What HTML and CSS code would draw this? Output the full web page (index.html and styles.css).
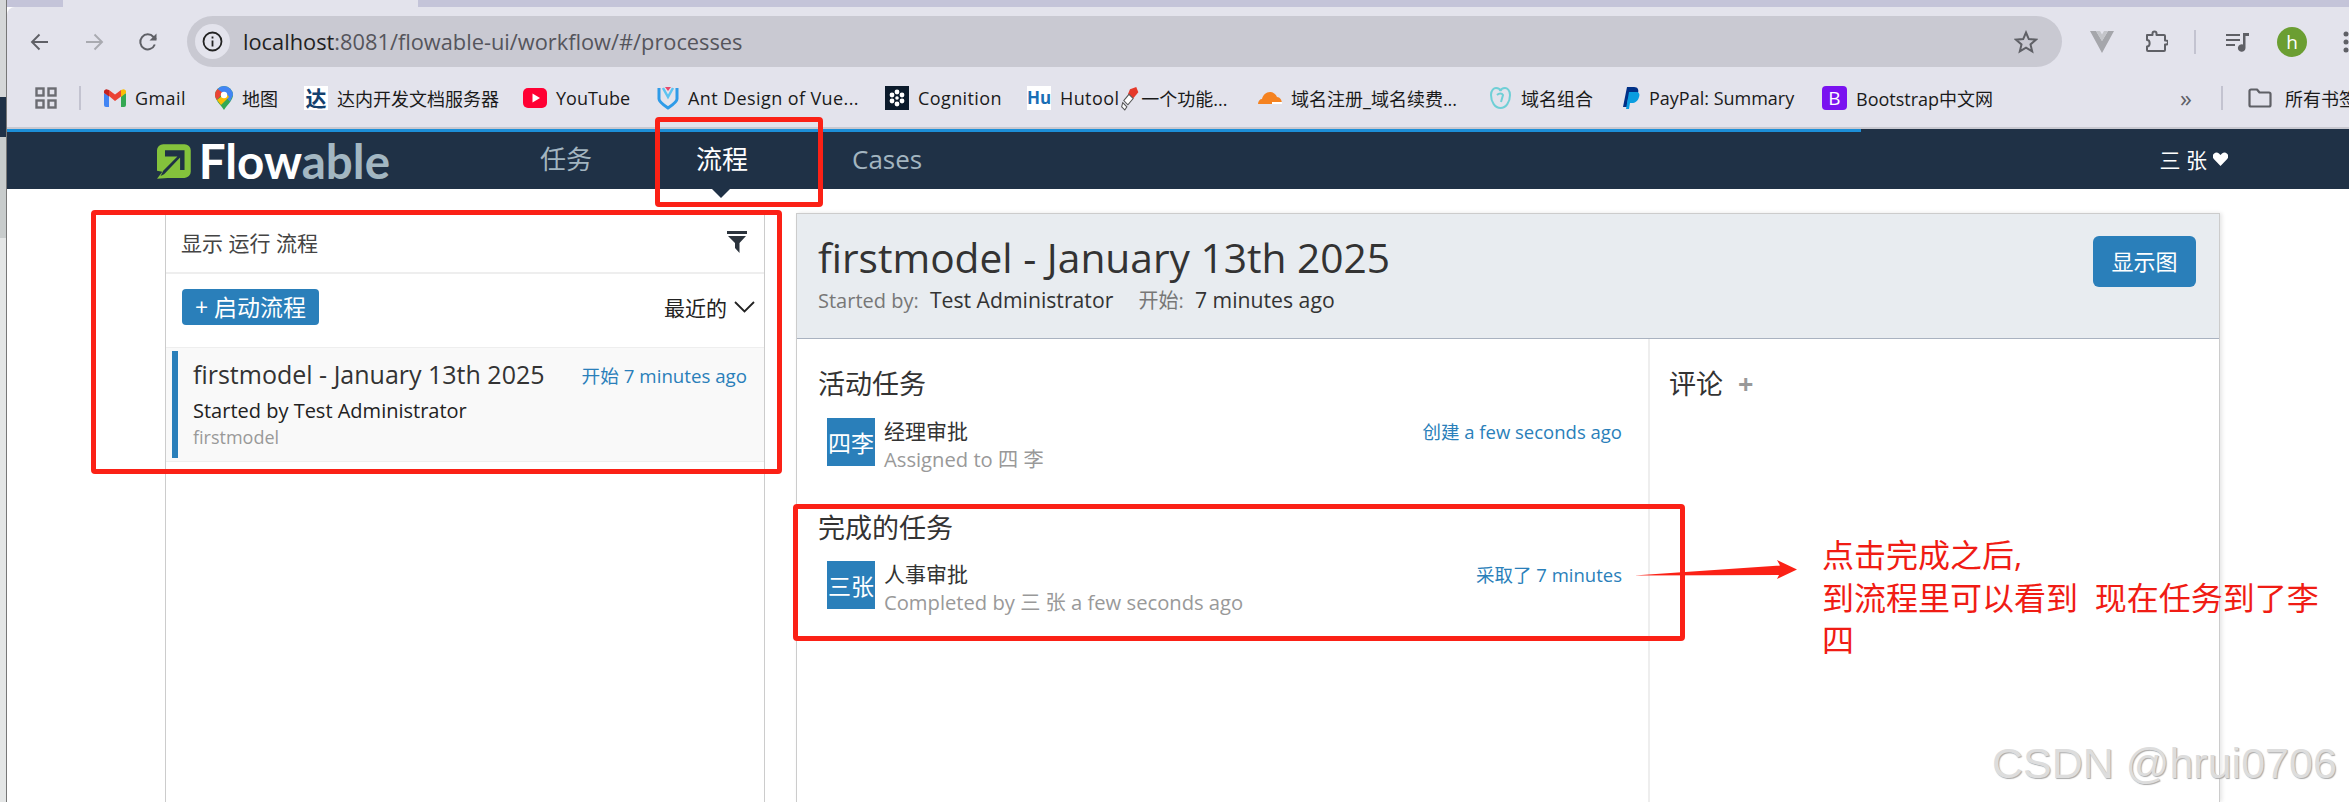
FILE: index.html
```html
<!DOCTYPE html>
<html lang="en">
<head>
    <meta charset="UTF-8">
    <title>Flowable - processes</title>
    <link rel="stylesheet" href="styles.css">
</head>
<body>

<div class="side-strip"></div>

<div class="window">
    <!-- browser chrome -->
    <div class="tab-strip">
        <div class="tab-active"></div>
    </div>
    <div class="toolbar">
        <div class="tool-btn">
            <svg width="20" height="20" viewBox="0 0 20 20" fill="none" stroke="#5f6066" stroke-width="1.9"><path d="M18 10H2M9.500 2.500 2 10l7.500 7.500"/></svg>
        </div>
        <div class="tool-btn">
            <svg width="20" height="20" viewBox="0 0 20 20" fill="none" stroke="#a9aab0" stroke-width="1.9"><path d="M2 10h16M10.500 2.500 18 10l-7.500 7.500"/></svg>
        </div>
        <div class="tool-btn">
            <svg width="20" height="20" viewBox="0 0 20 20" fill="none" stroke="#5f6066" stroke-width="2"><path d="M16.800 12.500A7.500 7.500 0 1 1 15.500 5L18 7.500"/><path d="M18.500 1.500v7h-7" fill="#5f6066" stroke="none"/></svg>
        </div>
        <div class="url-bar">
            <div class="url-info">
                <svg width="21" height="21" viewBox="0 0 21 21" fill="none" stroke="#222" stroke-width="1.800"><circle cx="10.500" cy="10.500" r="9"/><path d="M10.500 9.500v6M10.500 5.500v2"/></svg>
            </div>
            <div class="url-text"><span class="url-host">localhost</span>:8081/flowable-ui/workflow/#/processes</div>
            <svg class="url-star" width="24" height="24" viewBox="0 0 24 24" fill="none" stroke="#5f6066" stroke-width="2"><path d="M12 2.500l2.800 6.600 7.200.6-5.500 4.700 1.700 7-6.200-3.700-6.200 3.700 1.700-7L2 9.700l7.200-.6z"/></svg>
        </div>
        <div class="tool-btn first-right">
            <svg width="24" height="22" viewBox="0 0 24 22"><path d="M0 0h6l6 10 6-10h6L12 22z" fill="#a5a6ab"/><path d="M6 0h4l2 3.500L14 0h4l-6 10z" fill="#c4c5ca"/></svg>
        </div>
        <div class="tool-btn">
            <svg width="24" height="24" viewBox="0 0 24 24" fill="none" stroke="#5f6066" stroke-width="2"><path d="M3 5h5.500V3.500a2 2 0 0 1 4 0V5H20a1 1 0 0 1 1 1v4.500h1a2 2 0 0 1 0 4h-1V20a1 1 0 0 1-1 1H4a1 1 0 0 1-1-1v-3.500c3.500 0 3.500-6.500 0-6.500z" stroke-linejoin="round"/></svg>
        </div>
        <div class="tool-sep"></div>
        <div class="tool-btn">
            <svg width="24" height="20" viewBox="0 0 24 20" fill="#5f6066"><path d="M0 2h14v2H0zM0 7h14v2H0zM0 12h9v2H0z"/><path d="M17 1h6v3h-3.500v12a3.800 3.800 0 1 1-2.500-3.500z"/></svg>
        </div>
        <div class="tool-btn"><div class="profile">h</div></div>
        <div class="tool-btn">
            <svg width="6" height="24" viewBox="0 0 6 24" fill="#5f6066"><circle cx="3" cy="4" r="2.500"/><circle cx="3" cy="12" r="2.500"/><circle cx="3" cy="20" r="2.500"/></svg>
        </div>
    </div>
    <div class="bookmarks">
        <svg class="apps-icon" width="22" height="22" viewBox="0 0 22 22" fill="none" stroke="#6b6c72" stroke-width="2.400"><rect x="1.500" y="1.500" width="7" height="7"/><rect x="13.500" y="1.500" width="7" height="7"/><rect x="1.500" y="13.500" width="7" height="7"/><rect x="13.500" y="13.500" width="7" height="7"/></svg>
        <div class="mark-sep"></div>
        <div class="mark mark-gmail">
            <svg width="22" height="18" viewBox="0 0 22 18"><path d="M0 4v12a2 2 0 0 0 2 2h3V7z" fill="#4285f4"/><path d="M22 4v12a2 2 0 0 1-2 2h-3V7z" fill="#34a853"/><path d="M17 1v7l5-4V2.500c0-2-2.500-3-4-1.800z" fill="#fbbc04"/><path d="M5 7V1l6 4.500L17 1v6.500l-6 4.500z" fill="#ea4335"/><path d="M0 2.500V4l5 3.500V1l-1-.3C2.500-.5 0 .5 0 2.500z" fill="#c5221f"/></svg>
            <span class="wide">Gmail</span>
        </div>
        <div class="mark mark-maps">
            <svg width="18" height="24" viewBox="0 0 18 24"><path d="M9 0a9 9 0 0 1 9 9c0 5-5 9-9 15-4-6-9-10-9-15a9 9 0 0 1 9-9z" fill="#34a853"/><path d="M2.500 3 15 15.500 18 9A9 9 0 0 0 9 0 9 9 0 0 0 2.500 3z" fill="#4285f4"/><path d="M2.500 3A9 9 0 0 0 0 9c0 1.800.8 3.500 2 5l6-7z" fill="#ea4335"/><path d="M2 14l4 5 8-8-3-4z" fill="#fbbc04"/><circle cx="9" cy="9" r="3.200" fill="#fff"/></svg>
            <span>地图</span>
        </div>
        <div class="mark mark-da">
            <div class="fav-da">达</div>
            <span>达内开发文档服务器</span>
        </div>
        <div class="mark mark-yt">
            <svg width="24" height="24" viewBox="0 0 24 24"><rect y="2" width="24" height="20" rx="5" fill="#ff0033"/><path d="M9.500 7.500v9l7.500-4.500z" fill="#fff"/></svg>
            <span>YouTube</span>
        </div>
        <div class="mark mark-ant">
            <svg width="22" height="24" viewBox="0 0 22 24" fill="none"><path d="M2 2v11c0 3 6 7 9 9 3-2 9-6 9-9V2" stroke="#2f9be8" stroke-width="3"/><path d="M6 2l5 9 5-9" stroke="#5cc3f0" stroke-width="2.500"/><path d="M8 1h6l-3 4z" fill="#e8476a"/></svg>
            <span class="wide">Ant Design of Vue...</span>
        </div>
        <div class="mark mark-cog">
            <div class="fav-cog">
                <svg width="16" height="18" viewBox="0 0 16 18" fill="#fff"><circle cx="8" cy="3" r="2.400"/><circle cx="8" cy="15" r="2.400"/><circle cx="3" cy="6" r="2.400"/><circle cx="13" cy="6" r="2.400"/><circle cx="3" cy="12" r="2.400"/><circle cx="13" cy="12" r="2.400"/><circle cx="8" cy="9" r="1.800"/></svg>
            </div>
            <span class="wide">Cognition</span>
        </div>
        <div class="mark mark-hu">
            <div class="fav-hu">Hu</div>
            <span class="hutool"><span class="wide">Hutool</span><svg width="22" height="25" viewBox="0 0 18 24"><path d="M9 3l6-2 2 5-5 6-5-4z" fill="#e5392a"/><path d="M3 14l5-6 4 4-5 6z" fill="#fff" stroke="#555"/><path d="M2 16l4 4-2 3-3-3z" fill="#fff" stroke="#555"/></svg>一个功能...</span>
        </div>
        <div class="mark mark-cloud">
            <svg width="24" height="14" viewBox="0 0 24 14"><path d="M0 13c0-3 2-5 4-5 1-4 4-7 8-7 3 0 6 2 7 5 3 0 5 3 5 7z" fill="#f58220"/><path d="M14 11h10v2H14z" fill="#fff"/></svg>
            <span>域名注册_域名续费...</span>
        </div>
        <div class="mark mark-domain">
            <svg width="23" height="24" viewBox="0 0 23 24" fill="none" stroke="#6fcfd6" stroke-width="2"><path d="M11.500 22C6 22 2 16 2 9c0-5 3-7 5-7s4 1 4.500 3C12 3 14 2 16 2s5 2 5 7c0 7-4 13-9.500 13z"/><path d="M8 9c2-2 5-2 6 0l-2 7"/></svg>
            <span>域名组合</span>
        </div>
        <div class="mark mark-paypal">
            <svg width="19" height="24" viewBox="0 0 19 24"><path d="M6 1h7c4 0 5 3 4 6-1 4-4 6-8 6H7l-1 8H2z" fill="#003087"/><path d="M8 6h7c3 0 4 2 3 5-1 4-4 6-7 6H9l-1 6H5z" fill="#0a9de0"/></svg>
            <span>PayPal: Summary</span>
        </div>
        <div class="mark mark-bs">
            <div class="fav-bs">B</div>
            <span>Bootstrap中文网</span>
        </div>
        <div class="mark-more">»</div>
        <div class="mark-sep end"></div>
        <div class="mark all-marks">
            <svg width="24" height="20" viewBox="0 0 24 20" fill="none" stroke="#5f6066" stroke-width="2.200"><path d="M1.500 3a1.500 1.500 0 0 1 1.500-1.500h6L11.500 4.500H21A1.500 1.500 0 0 1 22.500 6v11a1.500 1.500 0 0 1-1.500 1.500H3A1.500 1.500 0 0 1 1.500 17z" stroke-linejoin="round"/></svg>
            <span>所有书签</span>
        </div>
    </div>

    <!-- flowable app -->
    <div class="navbar">
        <div class="load-bar"></div>
        <div class="logo">
            <svg width="38" height="38" viewBox="0 0 38 38"><path d="M7 0h24a7 7 0 0 1 7 7v24a7 7 0 0 1-7 7H12l-12 1 6-8-6-1V7a7 7 0 0 1 7-7z" fill="#84c23c"/><path d="M9 7h22v22h-5V15L8 34l-4 2 3-6 16-16H9z" fill="#1f3146"/><path d="M15 30h12v2H15z" fill="#84c23c"/></svg>
            <span class="logo-text">Flow<span class="logo-light">able</span></span>
        </div>
        <div class="nav-item nav-tasks">任务</div>
        <div class="nav-item active">流程</div>
        <div class="nav-item nav-cases">Cases</div>
        <div class="nav-user">三 张
            <svg width="15" height="14" viewBox="0 0 15 14" fill="#fff"><path d="M7.500 14 .8 7A3.800 3.800 0 0 1 6 1.500L7.500 3 9 1.500A3.800 3.800 0 0 1 14.200 7z"/></svg>
        </div>
    </div>

    <div class="main">
        <div class="list-panel">
            <div class="list-header">
                <span>显示 运行 流程</span>
                <svg width="20" height="22" viewBox="0 0 20 22" fill="#2b333c"><path d="M0 0h20v3H0zM1 5h18l-6.500 7v10L8 17v-5z"/></svg>
            </div>
            <div class="list-actions">
                <div class="start-btn"><span class="plus">+</span> 启动流程</div>
                <div class="sort-link">最近的
                    <svg width="21" height="12" viewBox="0 0 21 12" fill="none" stroke="#222" stroke-width="1.800"><path d="M1 1l9.500 9.500L20 1"/></svg>
                </div>
            </div>
            <div class="list-item">
                <div class="list-item-inner">
                    <div class="item-top">
                        <span class="item-title">firstmodel - January 13th 2025</span>
                        <span class="item-date">开始 7 minutes ago</span>
                    </div>
                    <div class="item-by">Started by Test Administrator</div>
                    <div class="item-key">firstmodel</div>
                </div>
            </div>
        </div>

        <div class="detail-panel">
            <div class="detail-header">
                <div>
                    <div class="detail-title">firstmodel - January 13th 2025</div>
                    <div class="detail-sub">
                        <span class="sub-label">Started by:</span>
                        <span class="sub-value">Test Administrator</span>
                        <span class="sub-label second">开始:</span>
                        <span class="sub-value">7 minutes ago</span>
                    </div>
                </div>
                <div class="diagram-btn">显示图</div>
            </div>
            <div class="detail-body">
                <div class="tasks-col">
                    <h3 class="section-title">活动任务</h3>
                    <div class="task-row">
                        <div class="avatar">四李</div>
                        <div class="task-text">
                            <div class="task-name">经理审批</div>
                            <div class="task-sub">Assigned to 四 李</div>
                        </div>
                        <div class="task-time">创建 a few seconds ago</div>
                    </div>
                    <h3 class="section-title done">完成的任务</h3>
                    <div class="task-row">
                        <div class="avatar">三张</div>
                        <div class="task-text">
                            <div class="task-name">人事审批</div>
                            <div class="task-sub">Completed by 三 张 a few seconds ago</div>
                        </div>
                        <div class="task-time">采取了 7 minutes</div>
                    </div>
                </div>
                <div class="comments-col">
                    <h3 class="section-title">评论 <span class="add-comment">+</span></h3>
                </div>
            </div>
        </div>
    </div>
</div>

<!-- annotations drawn on top of the screenshot -->
<div class="note-box box-nav"></div>
<div class="note-box box-list"></div>
<div class="note-box box-done"></div>
<svg class="note-arrow" width="170" height="24" viewBox="0 0 170 24"><path d="M0 15.500 146 5.500 143 0l20 9.500L143 19l2-4z" fill="#fb2116"/></svg>
<div class="note-text">点击完成之后,<br>到流程里可以看到&nbsp; 现在任务到了李<br>四</div>
<div class="watermark">CSDN @hrui0706</div>

</body>
</html>
```

FILE: styles.css
```css
body {
    margin: 0;
    height: 802px;
    overflow: hidden;
    position: relative;
    background-color: #fff;
    font-family: "Open Sans", "Noto Sans CJK SC", sans-serif;
    display: flex;
}
h3 {
    margin: 0;
    font-weight: normal;
}
.side-strip {
    width: 6px;
    flex: none;
    background: linear-gradient(#d5d7d8 0, #d5d7d8 97px, #1f3146 97px, #1f3146 137px, #c8cccc 137px, #c8cccc 238px, #e4e6e6 238px);
    border-right: 1px solid #777;
}
.window {
    flex: 1;
    min-width: 0;
    display: flex;
    flex-direction: column;
}

/* browser chrome */
.tab-strip {
    height: 7px;
    background-color: #c4c4d9;
    padding-left: 56px;
}
.tab-active {
    width: 355px;
    height: 7px;
    background-color: #e3e3ec;
}
.toolbar {
    height: 65px;
    background-color: #e3e3ec;
    display: flex;
    align-items: center;
    padding: 9px 0 5px 6px;
    box-sizing: border-box;
    border-top-left-radius: 8px;
}
.tool-btn {
    width: 54px;
    flex: none;
    display: flex;
    justify-content: center;
    align-items: center;
}
.url-bar {
    width: 1875px;
    height: 51px;
    flex: none;
    margin-left: 12px;
    border-radius: 26px;
    background-color: #c9c9d2;
    display: flex;
    align-items: center;
    box-sizing: border-box;
    padding: 0 24px 0 8px;
}
.url-info {
    width: 35px;
    height: 35px;
    border-radius: 50%;
    background-color: #e3e3ec;
    display: flex;
    justify-content: center;
    align-items: center;
}
.url-text {
    margin-left: 13px;
    font-size: 21.800px;
    color: #55555c;
    flex: 1;
}
.url-host {
    color: #1f1f22;
}
.first-right {
    margin-left: 13px;
}
.tool-sep {
    width: 2px;
    height: 24px;
    flex: none;
    margin: 0 15px 0 11px;
    background-color: #c3c3d0;
}
.profile {
    width: 30px;
    height: 30px;
    border-radius: 50%;
    background-color: #6b9e32;
    color: #fff;
    font-size: 19px;
    line-height: 30px;
    text-align: center;
}
.bookmarks {
    height: 57px;
    flex: none;
    background-color: #e3e3ec;
    border-bottom: 2px solid #c8c8d0;
    display: flex;
    align-items: center;
    padding: 0 0 3px 28px;
    box-sizing: border-box;
    font-size: 18px;
    color: #1a1a1a;
    overflow: hidden;
    white-space: nowrap;
}
.apps-icon {
    flex: none;
}
.mark-sep {
    width: 2px;
    height: 24px;
    flex: none;
    background-color: #c3c3d0;
    margin: 0 23px 0 22px;
}
.mark-sep.end {
    margin: 0 25px 0 0;
}
.mark {
    display: flex;
    align-items: center;
    gap: 9px;
    flex: none;
}
.wide {
    letter-spacing: 0.4px;
}
.mark-gmail { width: 111px; }
.mark-maps { width: 89px; }
.mark-da { width: 219px; }
.mark-yt { width: 134px; }
.mark-ant { width: 228px; }
.mark-cog { width: 142px; }
.mark-hu { width: 231px; }
.mark-cloud { width: 231px; }
.mark-domain { width: 132px; }
.mark-paypal { width: 201px; }
.mark-bs { width: 358px; }
.fav-da {
    width: 24px;
    height: 24px;
    background-color: #fff;
    color: #13406e;
    font-size: 21px;
    font-weight: bold;
    line-height: 24px;
    text-align: center;
}
.fav-cog {
    width: 24px;
    height: 24px;
    background-color: #0b1a2b;
    display: flex;
    justify-content: center;
    align-items: center;
}
.fav-hu {
    width: 24px;
    height: 24px;
    background-color: #fff;
    color: #1a6fb5;
    font-size: 17px;
    font-weight: bold;
    line-height: 24px;
    text-align: center;
}
.fav-bs {
    width: 25px;
    height: 24px;
    border-radius: 4px;
    background-color: #7a12f0;
    color: #fff;
    font-size: 19px;
    line-height: 24px;
    text-align: center;
}
.hutool {
    display: flex;
    align-items: center;
}
.mark-more {
    width: 41px;
    color: #5f6066;
    font-size: 24px;
    line-height: 24px;
    flex: none;
}
.all-marks {
    gap: 13px;
}

/* app navbar */
.navbar {
    height: 60px;
    flex: none;
    background-color: #1f3146;
    position: relative;
    display: flex;
    align-items: center;
    padding-left: 150px;
    font-size: 26px;
}
.load-bar {
    position: absolute;
    left: 0;
    top: 0;
    width: 1854px;
    height: 3px;
    background-color: #1c8fd8;
}
.logo {
    width: 233px;
    flex: none;
    display: flex;
    align-items: center;
    gap: 8px;
    padding-top: 3px;
}
.logo-text {
    font-family: Lato, sans-serif;
    font-weight: 700;
    font-size: 47.500px;
    line-height: 38px;
    color: #fff;
}
.logo-light {
    color: #a3b7c2;
}
.nav-item {
    color: #a3b5c0;
    line-height: 36px;
    position: relative;
}
.nav-tasks {
    margin-left: 150px;
}
.nav-item.active {
    color: #fff;
    margin-left: 104px;
}
.nav-item.active::after {
    content: "";
    position: absolute;
    left: 16px;
    top: 48px;
    border-left: 9px solid transparent;
    border-right: 9px solid transparent;
    border-top: 9px solid #1f3146;
}
.nav-cases {
    margin-left: 104px;
}
.nav-user {
    margin-left: auto;
    margin-right: 121px;
    color: #fff;
    font-size: 21px;
    display: flex;
    align-items: center;
    gap: 6px;
}

/* main page */
.main {
    flex: 1;
    min-height: 0;
    display: flex;
    padding: 24px 0 0 158px;
    gap: 31px;
}
.list-panel {
    width: 600px;
    flex: none;
    box-sizing: border-box;
    border-left: 1px solid #ccc;
    border-right: 1px solid #ccc;
}
.list-header {
    height: 61px;
    box-sizing: border-box;
    border-bottom: 2px solid #eee;
    display: flex;
    justify-content: space-between;
    align-items: center;
    padding: 0 17px 2px 15px;
    font-size: 21px;
    color: #444;
}
.list-actions {
    height: 73px;
    box-sizing: border-box;
    padding: 15px 9px 0 16px;
    display: flex;
    justify-content: space-between;
    align-items: flex-start;
}
.start-btn {
    width: 137px;
    height: 36px;
    border-radius: 4px;
    background-color: #2a7fba;
    color: #fff;
    font-size: 23px;
    line-height: 36px;
    text-align: center;
    white-space: nowrap;
}
.sort-link {
    display: flex;
    align-items: center;
    gap: 7px;
    height: 36px;
    font-size: 21px;
    color: #222;
}
.list-item {
    background-color: #f9f9f9;
    border-top: 1px solid #eee;
    border-bottom: 1px solid #eee;
    height: 115px;
    box-sizing: border-box;
    padding: 3px 17px 0 6px;
}
.list-item-inner {
    height: 107px;
    box-sizing: border-box;
    border-left: 6px solid #2a7fba;
    padding-left: 15px;
}
.item-top {
    height: 46px;
    display: flex;
    justify-content: space-between;
    align-items: center;
    margin-bottom: 2px;
}
.item-title {
    font-size: 25px;
    color: #333;
}
.item-date {
    font-size: 18.700px;
    color: #2a7fba;
}
.item-by {
    font-size: 20px;
    line-height: 24px;
    color: #222;
}
.item-key {
    font-size: 18px;
    line-height: 28px;
    color: #999;
}
.detail-panel {
    width: 1424px;
    flex: none;
    box-sizing: border-box;
    border: 1px solid #ccc;
    border-bottom: none;
    box-shadow: 2px 0 4px rgba(0, 0, 0, 0.1);
    display: flex;
    flex-direction: column;
}
.detail-header {
    height: 125px;
    flex: none;
    box-sizing: border-box;
    background-color: #e8ecf0;
    border-bottom: 1px solid #a9b2c0;
    display: flex;
    justify-content: space-between;
    align-items: flex-start;
    padding: 21px 23px 0 21px;
}
.detail-title {
    font-size: 40.700px;
    line-height: 44px;
    color: #333;
}
.detail-sub {
    margin-top: 7px;
    font-size: 20px;
    line-height: 28px;
}
.sub-label {
    color: #777;
    margin-right: 6px;
}
.sub-label.second {
    margin-left: 20px;
}
.sub-value {
    color: #333;
    font-size: 21.200px;
}
.diagram-btn {
    width: 103px;
    height: 51px;
    margin-top: 1px;
    border-radius: 6px;
    background-color: #2a7fba;
    color: #fff;
    font-size: 22px;
    line-height: 51px;
    text-align: center;
}
.detail-body {
    flex: 1;
    display: flex;
}
.tasks-col {
    width: 853px;
    flex: none;
    box-sizing: border-box;
    border-right: 2px solid #eee;
    padding: 25px 26px 0 21px;
}
.comments-col {
    padding: 25px 0 0 19px;
}
.section-title {
    font-size: 27px;
    line-height: 40px;
    color: #333;
    margin-bottom: 14px;
}
.section-title.done {
    margin-top: 42px;
    margin-bottom: 13px;
}
.add-comment {
    color: #999;
    font-weight: bold;
    margin-left: 8px;
}
.task-row {
    display: flex;
    height: 48px;
    padding-left: 9px;
}
.avatar {
    width: 48px;
    height: 48px;
    flex: none;
    background-color: #2a7fba;
    color: #fff;
    font-size: 23px;
    line-height: 50px;
    text-align: center;
    overflow: hidden;
    white-space: nowrap;
}
.task-text {
    flex: 1;
    margin-left: 9px;
}
.task-name {
    font-size: 21px;
    line-height: 26px;
    color: #333;
}
.task-sub {
    font-size: 20.200px;
    line-height: 30px;
    color: #999;
    white-space: nowrap;
}
.task-time {
    font-size: 18.500px;
    line-height: 28px;
    color: #2a7fba;
}

/* annotations on top of the screenshot */
.note-box {
    position: absolute;
    box-sizing: border-box;
    border: 5px solid #fb2116;
    border-radius: 4px;
}
.box-nav {
    left: 655px;
    top: 117px;
    width: 168px;
    height: 90px;
}
.box-list {
    left: 91px;
    top: 210px;
    width: 691px;
    height: 264px;
}
.box-done {
    left: 793px;
    top: 504px;
    width: 892px;
    height: 137px;
}
.note-arrow {
    position: absolute;
    left: 1634px;
    top: 560px;
}
.note-text {
    position: absolute;
    left: 1822px;
    top: 534px;
    font-size: 32px;
    line-height: 42.500px;
    color: #f01c14;
    white-space: nowrap;
}
.watermark {
    position: absolute;
    left: 1992px;
    top: 736px;
    font-family: "Liberation Sans", sans-serif;
    font-size: 43px;
    line-height: 54px;
    color: #ddd;
    white-space: nowrap;
    text-shadow: 1px 1px 1px #aaa;
}
```
